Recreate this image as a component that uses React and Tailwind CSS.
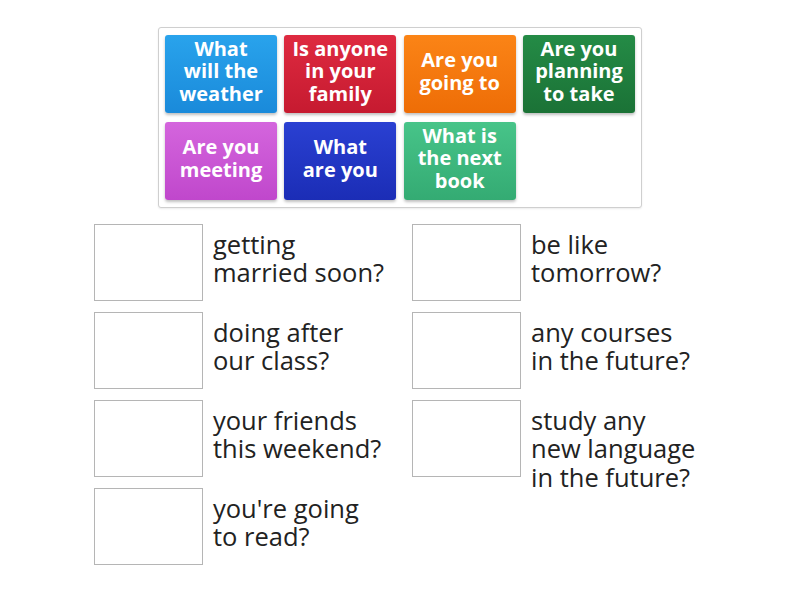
import React from 'react';

const tiles = [
  { lines: ['What', 'will the', 'weather'], color: 'from-[#29a3ec] to-[#1a8ada]' },
  { lines: ['Is anyone', 'in your', 'family'], color: 'from-[#de2a40] to-[#c61a30]' },
  { lines: ['Are you', 'going to'], color: 'from-[#fb8416] to-[#ee6d06]' },
  { lines: ['Are you', 'planning', 'to take'], color: 'from-[#248b46] to-[#1b7236]' },
  { lines: ['Are you', 'meeting'], color: 'from-[#d465dd] to-[#c047cc]' },
  { lines: ['What', 'are you'], color: 'from-[#2a40d2] to-[#1b2db6]' },
  { lines: ['What is', 'the next', 'book'], color: 'from-[#47c489] to-[#34ab73]' },
];

const leftSlots = [
  ['getting', 'married soon?'],
  ['doing after', 'our class?'],
  ['your friends', 'this weekend?'],
  ["you're going", 'to read?'],
];

const rightSlots = [
  ['be like', 'tomorrow?'],
  ['any courses', 'in the future?'],
  ['study any', 'new language', 'in the future?'],
];

const Slot = ({ lines }) => (
  <div className="flex gap-[10px]">
    <div className="w-[109px] h-[77px] shrink-0 border border-[#b5b5b5] bg-white"></div>
    <div className="mt-[5.5px] text-[25.5px] leading-[28.5px] text-[#222] whitespace-nowrap">
      {lines.map((line, i) => (
        <div key={i}>{line}</div>
      ))}
    </div>
  </div>
);

const App = () => {
  return (
    <div className="w-[800px] h-[600px] bg-white overflow-hidden font-['Open_Sans',sans-serif]">
      {/* Tuiles */}
      <div className="mx-auto mt-[27px] w-[484px] border border-[#cfcfcf] rounded-[3px] px-[6px] py-[7px] bg-white shadow-[0_1px_2px_rgba(0,0,0,0.08)]">
        <div className="grid grid-cols-4 gap-x-[7.3px] gap-y-[9px]">
          {tiles.map((t) => (
            <div
              key={t.lines.join(' ')}
              className={`h-[78px] rounded-[3px] bg-linear-to-b ${t.color} shadow-[0_2px_3px_rgba(0,0,0,0.25)] flex flex-col items-center justify-center pb-[5px] text-center text-white font-bold text-[20px] leading-[22.5px] whitespace-nowrap`}
            >
              {t.lines.map((line, i) => (
                <div key={i}>{line}</div>
              ))}
            </div>
          ))}
        </div>
      </div>

      {/* Emplacements */}
      <div className="flex ml-[94px] mt-[16px]">
        <div className="w-[318px] flex flex-col gap-[11px]">
          {leftSlots.map((s) => (
            <Slot key={s.join(' ')} lines={s} />
          ))}
        </div>
        <div className="w-[318px] flex flex-col gap-[11px]">
          {rightSlots.map((s) => (
            <Slot key={s.join(' ')} lines={s} />
          ))}
        </div>
      </div>
    </div>
  );
};

export default App;
